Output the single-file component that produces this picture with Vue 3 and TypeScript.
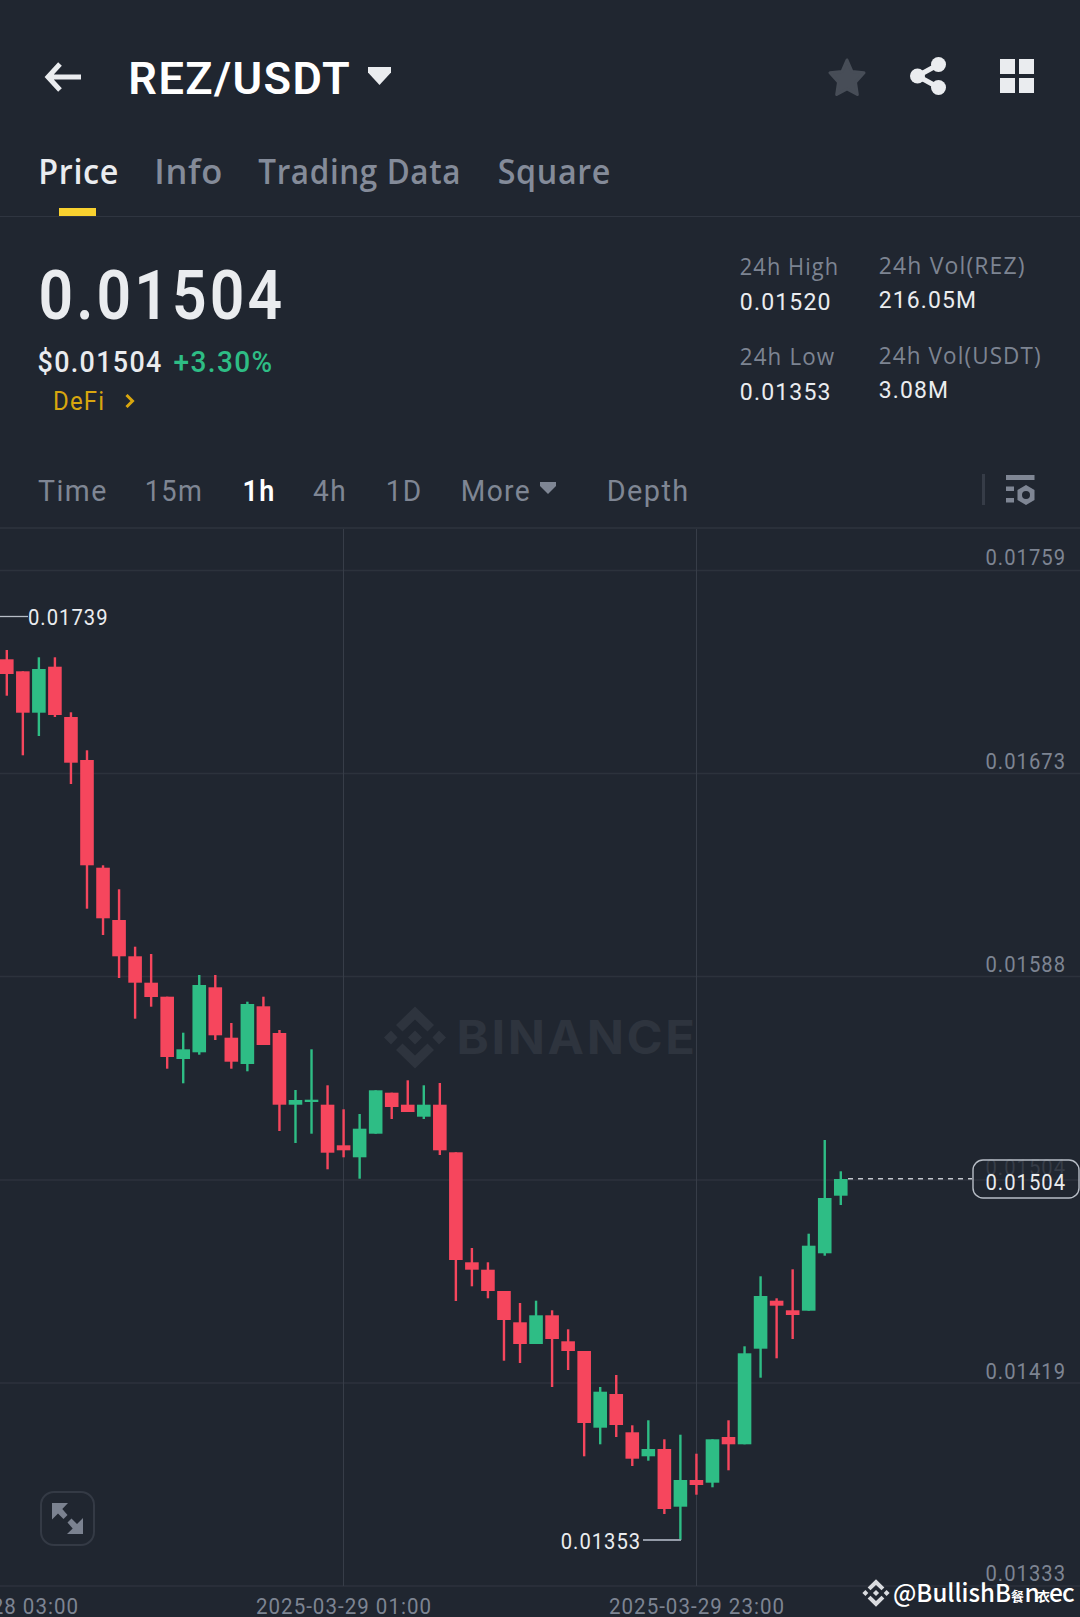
<script setup lang="ts">
import { h } from 'vue'

interface FitProps {
  t: string
  w: number
  cap: number
  font?: 'roboto' | 'open'
  weight?: number
  lb?: number
  ls?: number
}

const families = {
  roboto: { name: 'Roboto, sans-serif', cap: 0.711 },
  open: { name: '"Open Sans", sans-serif', cap: 0.714 },
}

// One line of text fitted to a given width; the box spans cap height to baseline.
const Fit = (p: FitProps) => {
  const fam = families[p.font ?? 'roboto']
  const size = p.cap / fam.cap
  const lb = (p.lb ?? 0.05) * size
  const ls = (p.ls ?? 0.05) * size
  return h(
    'svg',
    { width: p.w, height: p.cap, style: { overflow: 'visible', display: 'block', flex: 'none' } },
    [
      h(
        'text',
        {
          x: -lb,
          y: p.cap,
          fill: 'currentColor',
          'font-family': fam.name,
          'font-size': size,
          'font-weight': p.weight ?? 400,
          'letter-spacing': ls,
          textLength: p.w + lb + 0.04 * size + ls,
          lengthAdjust: 'spacingAndGlyphs',
        },
        p.t,
      ),
    ],
  )
}
Fit.props = ['t', 'w', 'cap', 'font', 'weight', 'lb', 'ls']

type Row = [number, number, number, number, 0 | 1]

// high, body top, body bottom, low, rising
const rows: Row[] = [
  [650, 659.3, 674, 695.7, 0],
  [671.3, 671.3, 712.7, 755.3, 0],
  [657.3, 669, 712.7, 736, 1],
  [657.3, 666.7, 715, 717, 0],
  [712.3, 717, 762.7, 784, 0],
  [750.3, 760, 865.3, 908.7, 0],
  [865.3, 867.7, 918.3, 935, 0],
  [889.3, 920, 956.3, 978, 0],
  [946.7, 956.3, 982.7, 1018.7, 0],
  [954, 982.7, 997, 1006.7, 0],
  [996.7, 996.7, 1057, 1068.7, 0],
  [1032.7, 1049.3, 1059, 1083.3, 1],
  [975, 985, 1052.3, 1054.7, 1],
  [975, 987.3, 1035.3, 1040, 0],
  [1023, 1037.7, 1061.7, 1068.7, 0],
  [1001.7, 1004, 1064, 1071.3, 1],
  [996.7, 1006.3, 1045, 1045, 0],
  [1030, 1033, 1104.7, 1131, 0],
  [1090, 1100, 1104.7, 1143, 1],
  [1049.3, 1099.7, 1102, 1133.7, 1],
  [1085.3, 1104.7, 1152.7, 1169.3, 0],
  [1109.3, 1145.3, 1150.3, 1157.3, 0],
  [1114, 1128.7, 1157.3, 1178.7, 1],
  [1090.3, 1090.3, 1133.7, 1133.7, 1],
  [1092.7, 1092.7, 1107, 1119, 0],
  [1080.3, 1104.7, 1112, 1112, 0],
  [1085.3, 1104.7, 1116.7, 1119, 1],
  [1083, 1104.7, 1150.3, 1155, 0],
  [1152.3, 1152.3, 1260, 1301, 0],
  [1248, 1262.3, 1269.7, 1286.3, 0],
  [1262.3, 1269.7, 1291, 1298.3, 0],
  [1291, 1291, 1320, 1360.7, 0],
  [1303, 1322.3, 1344, 1363, 0],
  [1300.7, 1315.3, 1344, 1344, 1],
  [1310.3, 1315.3, 1339, 1387, 0],
  [1329.3, 1341.3, 1351, 1370, 0],
  [1351, 1351, 1423, 1456.3, 0],
  [1387, 1391.7, 1427.7, 1444.3, 1],
  [1375, 1394, 1425, 1437, 0],
  [1425.3, 1432.3, 1458.7, 1466, 0],
  [1420.3, 1449, 1456.3, 1460.7, 1],
  [1439.3, 1449, 1509, 1514, 0],
  [1434.7, 1480, 1506.7, 1540, 1],
  [1453.7, 1480, 1485, 1494.7, 0],
  [1439.3, 1439.3, 1482.7, 1487.3, 1],
  [1420.3, 1437, 1444.3, 1470.3, 0],
  [1346.3, 1353.3, 1444.3, 1444.3, 1],
  [1276.3, 1296, 1348.7, 1377.7, 1],
  [1298.3, 1300.7, 1305.7, 1358.3, 0],
  [1269.3, 1310.3, 1315, 1339, 0],
  [1233.7, 1245.7, 1310.7, 1310.7, 1],
  [1140, 1198, 1253.3, 1255.7, 1],
  [1171.3, 1179, 1195.7, 1205, 1],
]

const candles = rows.map(([high, top, bottom, low, up], i) => ({
  x: 6.8 + i * 16.038,
  high,
  top,
  bottom,
  low,
  color: up ? '#2ebd85' : '#f6465d',
}))

const gridY = [570.5, 773.5, 976.5, 1180, 1383, 1586]
const gridX = [343.5, 696.5]
const axis = [
  { t: '0.01759', y: 565 },
  { t: '0.01673', y: 768.5 },
  { t: '0.01588', y: 972 },
  { t: '0.01419', y: 1378.5 },
  { t: '0.01333', y: 1581 },
]
const dates = [
  { t: '2025-03-28 03:00', x: -97 },
  { t: '2025-03-29 01:00', x: 256 },
  { t: '2025-03-29 23:00', x: 609 },
]
const frames = [
  { t: 'Time', w: 66, ml: 38.5, lb: 0.03 },
  { t: '15m', w: 53.5, ml: 42.5, lb: 0.08 },
  { t: '1h', w: 29, ml: 43.5, on: true, lb: 0.05 },
  { t: '4h', w: 30.5, ml: 41, lb: 0.03 },
  { t: '1D', w: 32, ml: 43.5, lb: 0.08 },
]
const tabs = [
  { t: 'Price', w: 76, ml: 41, on: true },
  { t: 'Info', w: 64, ml: 40 },
  { t: 'Trading Data', w: 200, ml: 38, lb: 0.02 },
  { t: 'Square', w: 110, ml: 40, lb: 0.04 },
]
const mark = 'M0-31 19-12.500 12.500-6 0-18 -12.500-6 -19-12.500ZM0 31 19 12.500 12.500 6 0 18 -12.500 6 -19 12.500ZM0-7 7 0 0 7 -7 0ZM-24-7 -17.500 0 -24 7 -31 0ZM24-7 31 0 24 7 17.500 0Z'
</script>

<template>
  <div class="screen">
    <header class="head">
      <svg class="back" width="38" height="30" viewBox="0 0 38 30">
        <path d="M37 15H5M16 2 4 15 16 28" fill="none" stroke="#eaecef" stroke-width="5" />
      </svg>
      <Fit class="title" t="REZ/USDT" :w="217" :cap="31.5" :weight="600" :lb="0.06" :ls="0.03" />
      <svg class="caret" width="23" height="18" viewBox="0 0 23 18">
        <path d="M0 0H23V5.500L11.500 18 0 5.500Z" fill="#eaecef" />
      </svg>
      <svg class="star" width="38" height="39" viewBox="0 0 38 39">
        <path
          d="M19 2 24 13.500 36 14.800 27.500 24.200 29.300 36.500 19 31 8.700 36.500 10.500 24.200 2 14.800 14 13.500Z"
          fill="#474d57" stroke="#474d57" stroke-width="3" stroke-linejoin="round"
        />
      </svg>
      <svg class="share" width="36" height="38" viewBox="0 0 36 38">
        <path d="M28.500 7.500 7.500 19 28.500 30.500" fill="none" stroke="#eaecef" stroke-width="5" />
        <circle cx="28.500" cy="7.500" r="7.500" fill="#eaecef" />
        <circle cx="7.500" cy="19" r="7.500" fill="#eaecef" />
        <circle cx="28.500" cy="30.500" r="7.500" fill="#eaecef" />
      </svg>
      <svg class="apps" width="34" height="34" viewBox="0 0 34 34" fill="#eaecef">
        <path d="M0 0H15V15H0ZM19 0H34V15H19ZM0 19H15V34H0ZM19 19H34V34H19Z" />
      </svg>
    </header>

    <nav class="tabs">
      <div v-for="t in tabs" :key="t.t" class="tab" :class="{ on: t.on }" :style="{ marginLeft: t.ml + 'px' }">
        <Fit :t="t.t" :w="t.w" :cap="24" font="open" :weight="600" :lb="t.lb ?? 0.08" :ls="0.02" />
      </div>
    </nav>

    <section class="summary">
      <div class="price">
        <Fit class="big" t="0.01504" :w="237" :cap="49" :weight="600" />
        <div class="sub">
          <Fit t="$0.01504" :w="121" :cap="20.5" :weight="500" />
          <Fit class="up" t="+3.30%" :w="96" :cap="20.5" :weight="500" />
        </div>
        <div class="cat">
          <Fit t="DeFi" :w="48" :cap="18" :lb="0.08" />
          <svg width="10" height="14" viewBox="0 0 10 14">
            <path d="M1.500 1 7.500 7 1.500 13" fill="none" stroke="currentColor" stroke-width="3" />
          </svg>
        </div>
      </div>
      <div class="stats low">
        <Fit class="label" t="24h High" :w="96" :cap="17.5" font="open" />
        <Fit class="value" t="0.01520" :w="88.5" :cap="17.3" />
        <Fit class="label" t="24h Low" :w="92" :cap="17.5" font="open" />
        <Fit class="value" t="0.01353" :w="88.5" :cap="17.3" />
      </div>
      <div class="stats">
        <Fit class="label" t="24h Vol(REZ)" :w="143.5" :cap="17.5" font="open" />
        <Fit class="value" t="216.05M" :w="95" :cap="17.3" />
        <Fit class="label" t="24h Vol(USDT)" :w="159.5" :cap="17.5" font="open" />
        <Fit class="value" t="3.08M" :w="67" :cap="17.3" />
      </div>
    </section>

    <div class="frames">
      <div v-for="f in frames" :key="f.t" class="frame" :class="{ on: f.on }" :style="{ marginLeft: f.ml + 'px' }">
        <Fit :t="f.t" :w="f.w" :cap="21" :weight="f.on ? 600 : 400" :lb="f.lb" />
      </div>
      <div class="frame more">
        <Fit t="More" :w="65.5" :cap="21" :lb="0.08" />
        <svg width="16" height="12" viewBox="0 0 16 12"><path d="M0 0H16V4L8 12 0 4Z" fill="currentColor" /></svg>
      </div>
      <div class="frame depth"><Fit t="Depth" :w="78" :cap="21" :lb="0.08" /></div>
      <i class="divider"></i>
      <svg class="config" width="29" height="30" viewBox="0 0 29 30" fill="#7f8694">
        <path d="M0 0H28.500V5H0ZM0 11.500H8V16H0ZM0 23H8V27.500H0Z" />
        <path fill-rule="evenodd" d="M20 10 28.500 15V25L20 30 11.500 25V15ZM20 16A4 4 0 1 0 20 24 4 4 0 1 0 20 16Z" />
      </svg>
    </div>

    <svg class="chart" width="1080" height="1088" viewBox="0 529 1080 1088">
      <g stroke="#2c323c" stroke-width="1.600">
        <line v-for="y in gridY" :key="y" x1="0" x2="1080" :y1="y" :y2="y" />
      </g>
      <g stroke="#373d48" stroke-width="1">
        <line v-for="x in gridX" :key="x" :x1="x" :x2="x" y1="529" y2="1586" />
      </g>
      <path :d="mark" transform="translate(415 1037.500)" fill="#2e343e" />
      <text class="brand" x="456.500" y="1054" textLength="241" lengthAdjust="spacingAndGlyphs">BINANCE</text>

      <g v-for="c in candles" :key="c.x" :fill="c.color">
        <rect :x="c.x - 1.2" :y="c.high" width="2.400" :height="c.low - c.high" />
        <rect :x="c.x - 6.8" :y="c.top" width="13.600" :height="c.bottom - c.top" />
      </g>

      <line x1="0" x2="28" y1="616.500" y2="616.500" stroke="#b7bdc6" stroke-width="1.300" />
      <text class="num bright" x="28" y="625" textLength="80.500" lengthAdjust="spacingAndGlyphs">0.01739</text>
      <line x1="643" x2="681" y1="1540" y2="1540" stroke="#949ba8" stroke-width="2" />
      <text class="num bright" x="560.700" y="1549" textLength="80.500" lengthAdjust="spacingAndGlyphs">0.01353</text>

      <text
        v-for="a in axis" :key="a.t" class="num" x="985.500" :y="a.y"
        textLength="80.500" lengthAdjust="spacingAndGlyphs"
      >{{ a.t }}</text>
      <text class="num ghost" x="985.500" y="1175" textLength="80.500" lengthAdjust="spacingAndGlyphs">0.01504</text>
      <line x1="848" x2="972" y1="1178.800" y2="1178.800" stroke="#c3c7ce" stroke-width="1.500" stroke-dasharray="5 5" />
      <rect x="973" y="1160" width="106" height="38" rx="10" fill="none" stroke="#b7bdc6" stroke-width="1.400" />
      <text class="num bright" x="985.500" y="1190" textLength="80.500" lengthAdjust="spacingAndGlyphs">0.01504</text>

      <text
        v-for="d in dates" :key="d.t" class="num" :x="d.x" y="1614"
        textLength="176" lengthAdjust="spacingAndGlyphs"
      >{{ d.t }}</text>

      <rect x="41" y="1492" width="53" height="53" rx="13" fill="none" stroke="#343a45" stroke-width="2" />
      <g fill="#7b8290">
        <path d="M52 1503H68L62.300 1509 67.500 1515 63.500 1519 58 1513.500 52 1519.500Z" />
        <path d="M83 1534H67L72.700 1528.500 67.500 1522.500 71.500 1518.500 77 1524 83 1518Z" />
      </g>

      <path :d="mark" transform="translate(876 1593) scale(.44)" fill="#d9dbdf" />
      <g class="author">
        <text x="893" y="1601.700" textLength="118" lengthAdjust="spacingAndGlyphs">@BullishB</text>
        <text class="tiny" x="1011" y="1601">餐</text>
        <text x="1024.500" y="1601.700">n</text>
        <text class="tiny" x="1037" y="1601">衣</text>
        <text x="1049" y="1601.700">e</text>
        <text x="1062" y="1601.700">c</text>
      </g>
    </svg>
  </div>
</template>

<style>
body {
  margin: 0;
  background: #202630;
}
</style>

<style scoped>
.screen {
  width: 1080px;
  height: 1617px;
  overflow: hidden;
  display: flex;
  flex-direction: column;
  background: #202630;
  color: #848e9c;
}
svg {
  display: block;
  flex: none;
}
.head {
  height: 152px;
  display: flex;
  align-items: center;
  box-sizing: border-box;
}
.back { margin: 1px 0 0 44px; }
.title { margin: 4px 0 0 49px; color: #fff; }
.caret { margin-left: 20px; }
.star { margin: 2px 0 0 437px; }
.share { margin-left: 44px; }
.apps { margin-left: 54px; }
.tabs {
  height: 64px;
  display: flex;
  border-bottom: 1px solid #2f3540;
}
.tab {
  height: 64px;
  padding-top: 7.5px;
  box-sizing: border-box;
  position: relative;
  color: #848b99;
}
.tab.on { color: #eaecef; }
.tab.on::after {
  content: '';
  position: absolute;
  left: 18px;
  bottom: 0;
  width: 37px;
  height: 8px;
  background: #f8d12f;
}
.summary {
  height: 235px;
  box-sizing: border-box;
  display: flex;
  padding-top: 38.500px;
}
.price { width: 741px; padding-top: 14px; box-sizing: border-box; }
.big { margin-left: 42px; color: #eaecef; }
.sub {
  display: flex;
  gap: 15px;
  margin: 32px 0 0 39px;
  color: #eaecef;
}
.up { color: #2ebd85; }
.cat {
  display: flex;
  align-items: center;
  gap: 22px;
  margin: 20.5px 0 0 55px;
  color: #d8a60e;
}
.stats { color: #7d8492; width: 160px; }
.stats.low { width: 139px; padding-top: 1.7px; }
.stats .value { margin: 18px 0 37.300px; color: #eaecef; }
.frames {
  height: 77px;
  box-sizing: border-box;
  border-bottom: 2px solid #2a303a;
  display: flex;
  align-items: center;
}
.frame { padding-top: 2.5px; color: #7f8694; }
.frame.on { color: #fff; }
.more { display: flex; align-items: center; gap: 12px; margin-left: 42.5px; }
.more svg:last-child { margin-top: -5px; }
.depth { margin-left: 53px; }
.divider { width: 2.5px; height: 31px; margin-left: 295px; background: #363c47; }
.config { margin-left: 21px; }
.brand {
  font: 700 46.8px Inter, sans-serif;
  letter-spacing: 2.5px;
  fill: #2e343e;
}
.num {
  font: 400 22.3px Roboto, sans-serif;
  letter-spacing: 1.1px;
  fill: #7d8492;
}
.num.bright { fill: #eaecef; }
.num.ghost { fill: #363c47; }
.author {
  font: 500 24.5px "Noto Sans CJK SC", sans-serif;
  fill: #fff;
}
.tiny { font-size: 13px; font-weight: 700; }
</style>
